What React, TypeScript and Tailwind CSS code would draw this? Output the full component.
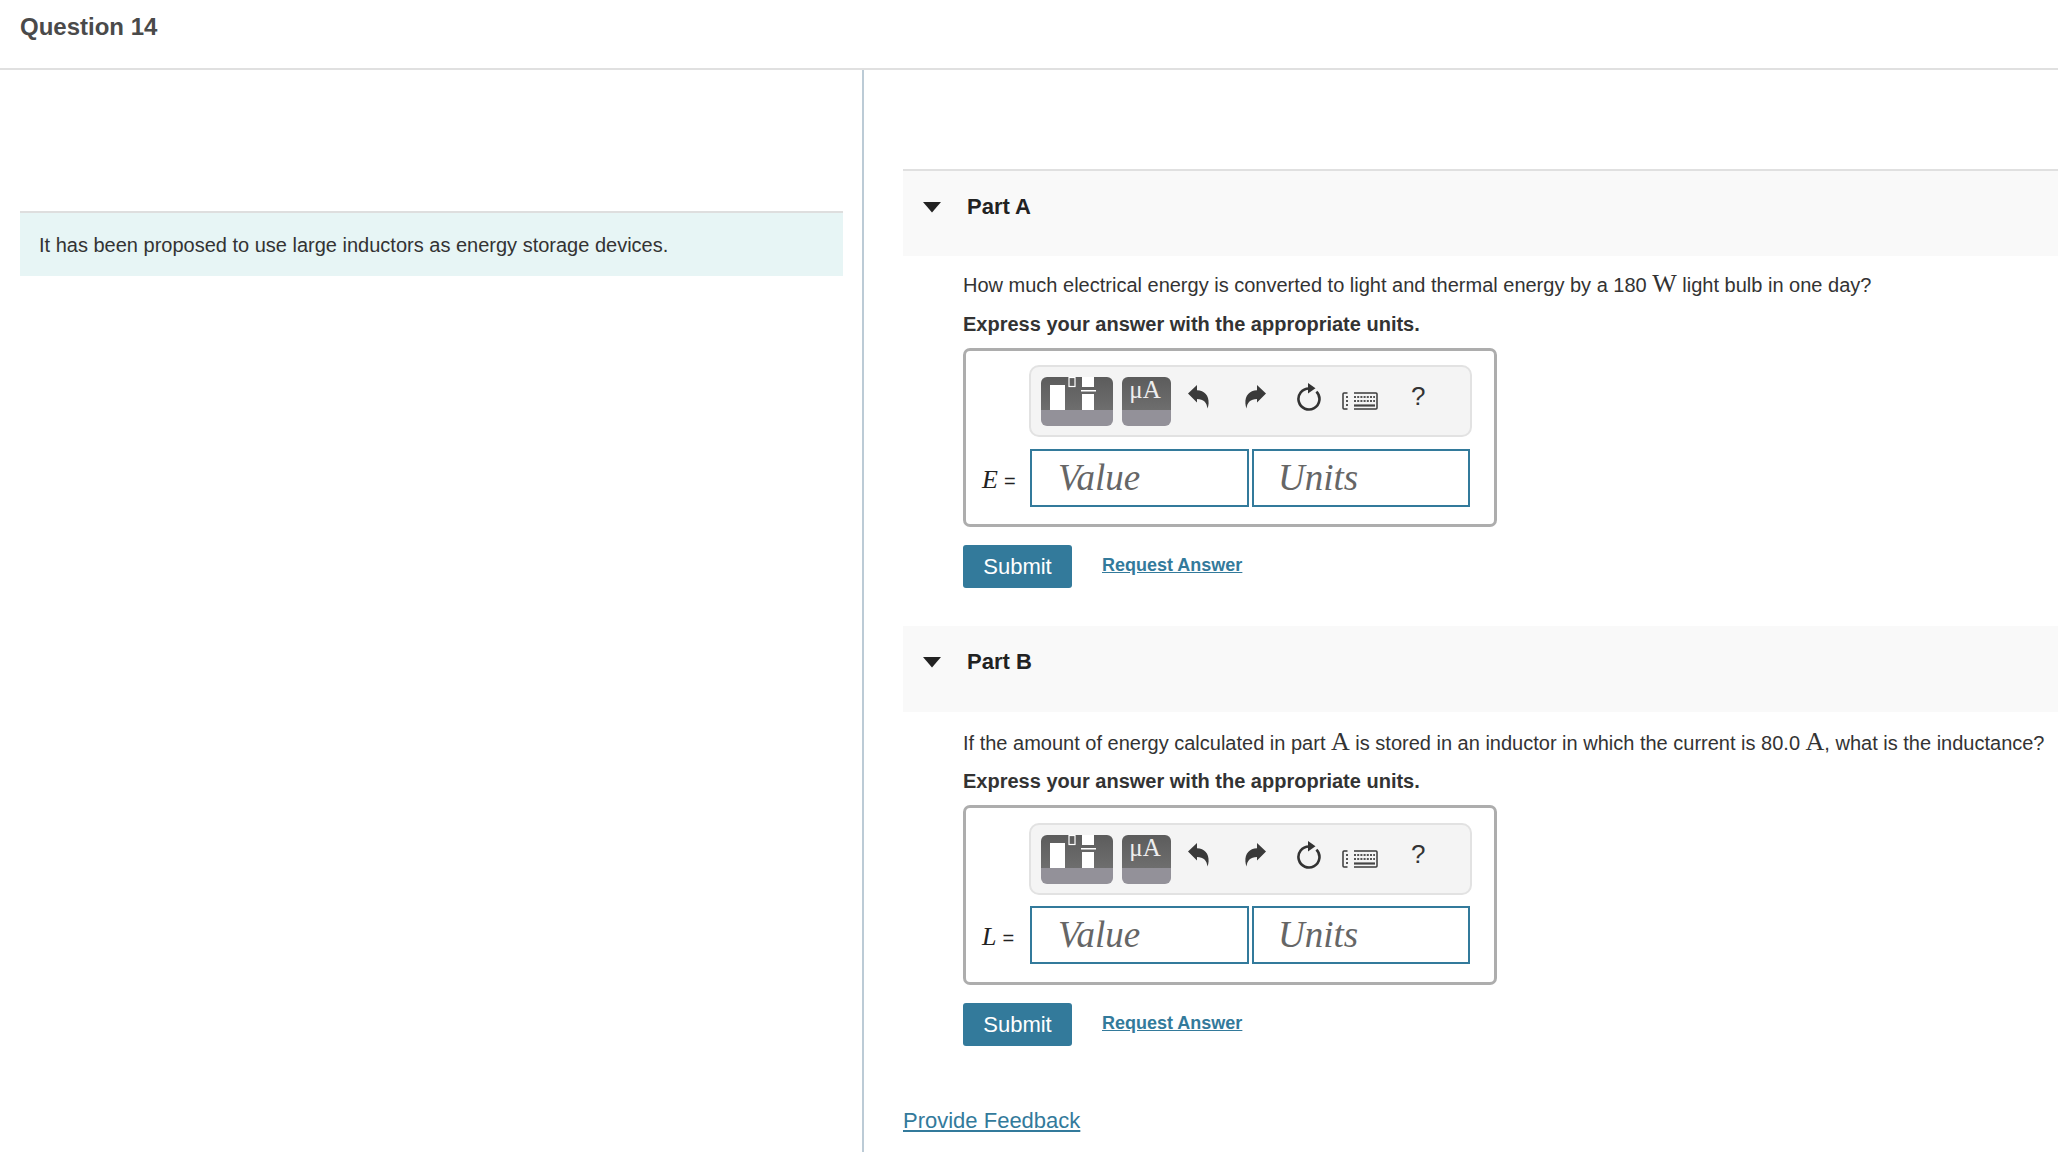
import React, { FC, ReactNode } from 'react';

const sans = "font-['Liberation_Sans',Arial,sans-serif]";
const serif = "font-['Liberation_Serif','Times_New_Roman',serif]";

const UndoIcon: FC<{ flip?: boolean }> = ({ flip }) => (
    <svg width="21" height="24" viewBox="0 0 21 24" className={flip ? '-scale-x-100' : ''}>
        <path d="M0 8.500 9 0v5.200c7.500.3 12 5 11.600 13.200-.1 1.800-.6 3.500-1.200 5.100-.4-5.800-3.800-9.500-10.400-9.500V17.500Z" fill="#3a3a3a" />
    </svg>
);

const ResetIcon: FC = () => (
    <svg width="26" height="28" viewBox="0 0 26 28">
        <path d="M13 5.500A10.500 10.500 0 1 0 20.400 8.600" fill="none" stroke="#333" strokeWidth="2.600" />
        <path d="M12 0 19.500 5.200 12 10.500Z" fill="#333" />
    </svg>
);

const KeyboardIcon: FC = () => (
    <svg width="36" height="18" viewBox="0 0 36 18" fill="none">
        <path d="M5.500 1H2Q1 1 1 2V16Q1 17 2 17H5.500" stroke="#3a3a3a" strokeWidth="1.500" />
        <path d="M12 1H34Q35 1 35 2V16Q35 17 34 17H12" stroke="#3a3a3a" strokeWidth="1.500" />
        <path d="M4 5h2M4 9h2M4 13h2M12 5h21M12 9h21" stroke="#555" strokeWidth="2" strokeDasharray="2 1.200" />
        <path d="M12 13.500h21" stroke="#444" strokeWidth="2.200" />
    </svg>
);

const TemplateIcon: FC = () => (
    <svg width="72" height="33" viewBox="0 0 72 33">
        <rect x="9" y="8" width="15" height="25" fill="#fff" />
        <rect x="28" y="0.500" width="6" height="9" fill="none" stroke="#fff" strokeWidth="1.200" />
        <rect x="41" y="0" width="12" height="10" fill="#fff" />
        <rect x="40" y="13" width="15" height="1.500" fill="#fff" />
        <rect x="41" y="17" width="12" height="16" fill="#fff" />
    </svg>
);

const ToolButton: FC<{ className: string; children: ReactNode }> = ({ className, children }) => (
    <div className={`${className} h-[49px] flex flex-col shrink-0`}>
        <div className="h-[33px] rounded-t-[6px] bg-gradient-to-b from-[#5c5c5c] to-[#6e6e6e] flex justify-center">{children}</div>
        <div className="flex-1 rounded-b-[6px] bg-[#939199]"></div>
    </div>
);

const Toolbar: FC = () => (
    <div className="w-[443px] h-[72px] ml-[63px] border-2 border-[#e2e2e2] rounded-[10px] bg-[#f4f4f4] flex items-start pt-[10px] pl-[10px]">
        <ToolButton className="w-[72px]"><TemplateIcon /></ToolButton>
        <ToolButton className="w-[49px] ml-[9px]">
            <span className={`${serif} text-[#eee] text-[25px] leading-[25px] -ml-[3px]`}>μA</span>
        </ToolButton>
        <div className="ml-[17px] mt-[8px]"><UndoIcon /></div>
        <div className="ml-[36px] mt-[8px]"><UndoIcon flip /></div>
        <div className="ml-[30px] mt-[6px]"><ResetIcon /></div>
        <div className="ml-[20px] mt-[15px]"><KeyboardIcon /></div>
        <span className={`${sans} ml-[33px] mt-[2px] text-[26px] leading-[34px] text-[#333]`}>?</span>
    </div>
);

const AnswerInput: FC<{ placeholder: string; className: string }> = ({ placeholder, className }) => (
    <div className={`${serif} ${className} h-[58px] border-2 border-[#337a9b] italic text-[37px] leading-[53px] text-[#666]`}>
        {placeholder}
    </div>
);

const Part: FC<{ label: string; letter: string; headerClass: string; bodyGap: string; expressGap: string; boxClass: string; rowGap: string; question: ReactNode }> = ({ label, letter, headerClass, bodyGap, expressGap, boxClass, rowGap, question }) => (
    <section>
        <div className={`${headerClass} bg-[#f9f9f9] flex items-start`}>
            <svg width="18" height="11" viewBox="0 0 18 11" className="ml-[20px] mt-[9px]">
                <path d="M0 0H18L9 10.500Z" fill="#222" />
            </svg>
            <h2 className="ml-[26px] mt-[1px] text-[22px] leading-[26px] font-bold text-[#222]">{label}</h2>
        </div>
        <div className={`pl-[60px] ${bodyGap}`}>
            <p className="text-[20px] leading-[24px] text-[#333] whitespace-nowrap">{question}</p>
            <p className={`${expressGap} text-[20px] leading-[24px] font-bold text-[#333]`}>Express your answer with the appropriate units.</p>
            <div className={`mt-[12px] w-[534px] ${boxClass} border-[3px] border-[#adadad] rounded-[7px]`}>
                <Toolbar />
                <div className={`${rowGap} flex items-center`}>
                    <span className="w-[64px] pl-[16px] pt-[3px] text-[#222] whitespace-nowrap">
                        <i className={`${serif} text-[26px]`}>{letter}</i>
                        <span className="ml-[6px] text-[20px]">=</span>
                    </span>
                    <AnswerInput placeholder="Value" className="w-[219px] pl-[26px]" />
                    <div className="w-[3px]"></div>
                    <AnswerInput placeholder="Units" className="w-[218px] pl-[24px]" />
                </div>
            </div>
            <div className="mt-[18px] flex items-start">
                <button className="w-[109px] h-[43px] rounded-[3px] bg-[#337a9b] text-white text-[22px]">Submit</button>
                <a className="ml-[30px] mt-[8px] text-[18px] leading-[24px] font-bold text-[#337a9b] underline">Request Answer</a>
            </div>
        </div>
    </section>
);

const Unit: FC<{ children: ReactNode }> = ({ children }) => (
    <span className={`${serif} text-[26px] leading-[20px]`}>{children}</span>
);

export default function App() {
    return (
        <div className={`${sans} h-[1152px] overflow-hidden bg-white flex flex-col`}>
            <header className="h-[70px] shrink-0 border-b-2 border-[#e0e0e0] pl-5 pt-[12px]">
                <h1 className="text-[24px] leading-[30px] font-bold text-[#4a4a4a]">Question 14</h1>
            </header>
            <div className="flex-1 flex min-h-0">
                <aside className="w-[864px] shrink-0 border-r-2 border-[#bccbd6] pl-5 pr-[19px] pt-[141px]">
                    <div className="h-[65px] border-t-2 border-[#dedede] bg-[#e7f5f5] pl-[19px] pt-[20px] text-[20px] leading-[24px] text-[#333]">
                        It has been proposed to use large inductors as energy storage devices.
                    </div>
                </aside>
                <main className="flex-1 min-w-0 pl-[39px] pt-[99px]">
                    <Part
                        label="Part A"
                        letter="E"
                        headerClass="h-[87px] border-t-2 border-[#e0e0e0] pt-[22px]"
                        bodyGap="pt-[17px]"
                        expressGap="mt-[15px]"
                        boxClass="h-[179px] pt-[14px]"
                        rowGap="mt-[12px]"
                        question={<>How much electrical energy is converted to light and thermal energy by a 180 <Unit>W</Unit> light bulb in one day?</>}
                    />
                    <div className="h-[38px]"></div>
                    <Part
                        label="Part B"
                        letter="L"
                        headerClass="h-[86px] pt-[22px]"
                        bodyGap="pt-[19px]"
                        expressGap="mt-[14px]"
                        boxClass="h-[180px] pt-[15px]"
                        rowGap="mt-[11px]"
                        question={<>If the amount of energy calculated in part <Unit>A</Unit> is stored in an inductor in which the current is 80.0 <Unit>A</Unit>, what is the inductance?</>}
                    />
                    <a className="block mt-[61px] text-[22px] leading-[28px] text-[#337a9b] underline">Provide Feedback</a>
                </main>
            </div>
        </div>
    );
}
